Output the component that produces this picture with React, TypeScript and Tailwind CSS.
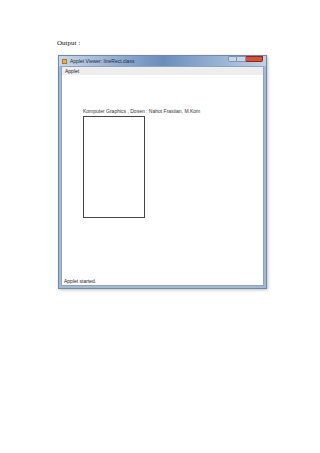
export default function App() {
  return (
    <div className="w-[320px] h-[453px] bg-white relative" style={{ fontFamily: '"Liberation Sans", Arial, sans-serif' }}>
      <div className="pt-[39px] pl-[57px]">
        <p className="text-[7px] leading-[8px] font-normal text-[#111]" style={{ fontFamily: '"Liberation Serif", serif' }}>
          Output :
        </p>
      </div>

      {/* Applet window */}
      <div className="ml-[58px] mt-[8px] w-[209px] h-[234px] flex flex-col bg-[#a3b8d2] border border-[#6f88a8] shadow-[1px_1px_3px_rgba(0,0,0,0.25)]">
        {/* Title bar */}
        <div className="h-[10px] flex items-center px-[3px] bg-gradient-to-r from-[#c9d7e8] via-[#6a8dbc] to-[#c2d2e6]">
          <div className="w-[5px] h-[5px] bg-[#e8b04a] border border-[#b07a1c] mr-[3px]" />
          <span className="text-[5px] leading-[6px] text-[#1b2a3c] whitespace-nowrap">Applet Viewer: lineRect.class</span>
          <div className="flex-1" />
          <div className="flex items-start self-start">
            <div className="w-[9px] h-[6px] bg-[#c9d6e6] border border-[#7e94b0] rounded-bl-[2px]" />
            <div className="w-[9px] h-[6px] bg-[#c9d6e6] border border-[#7e94b0] border-l-0" />
            <div className="w-[17px] h-[6px] bg-[#d9503a] border border-[#8a2a1c] border-l-0 rounded-br-[2px]" />
          </div>
        </div>

        {/* Client area */}
        <div className="flex-1 mx-[2px] mb-[2px] flex flex-col bg-white border border-[#8ea4bf]">
          <div className="h-[8px] bg-[#eeeeee] flex items-center px-[3px]">
            <span className="text-[5px] leading-[6px] text-[#222]">Applet</span>
          </div>
          <div className="flex-1 pl-[21px] pt-[33px]">
            <p className="text-[5px] leading-[6px] text-[#333] whitespace-nowrap">
              Komputer Graphics , Dosen : Nahot Frastian, M.Kom
            </p>
            <div className="mt-[2px] w-[62px] h-[102px] border border-[#444]" />
          </div>
          <div className="h-[9px] flex items-center px-[2px]">
            <span className="text-[5px] leading-[6px] text-[#222]">Applet started.</span>
          </div>
        </div>
      </div>
    </div>
  );
}
